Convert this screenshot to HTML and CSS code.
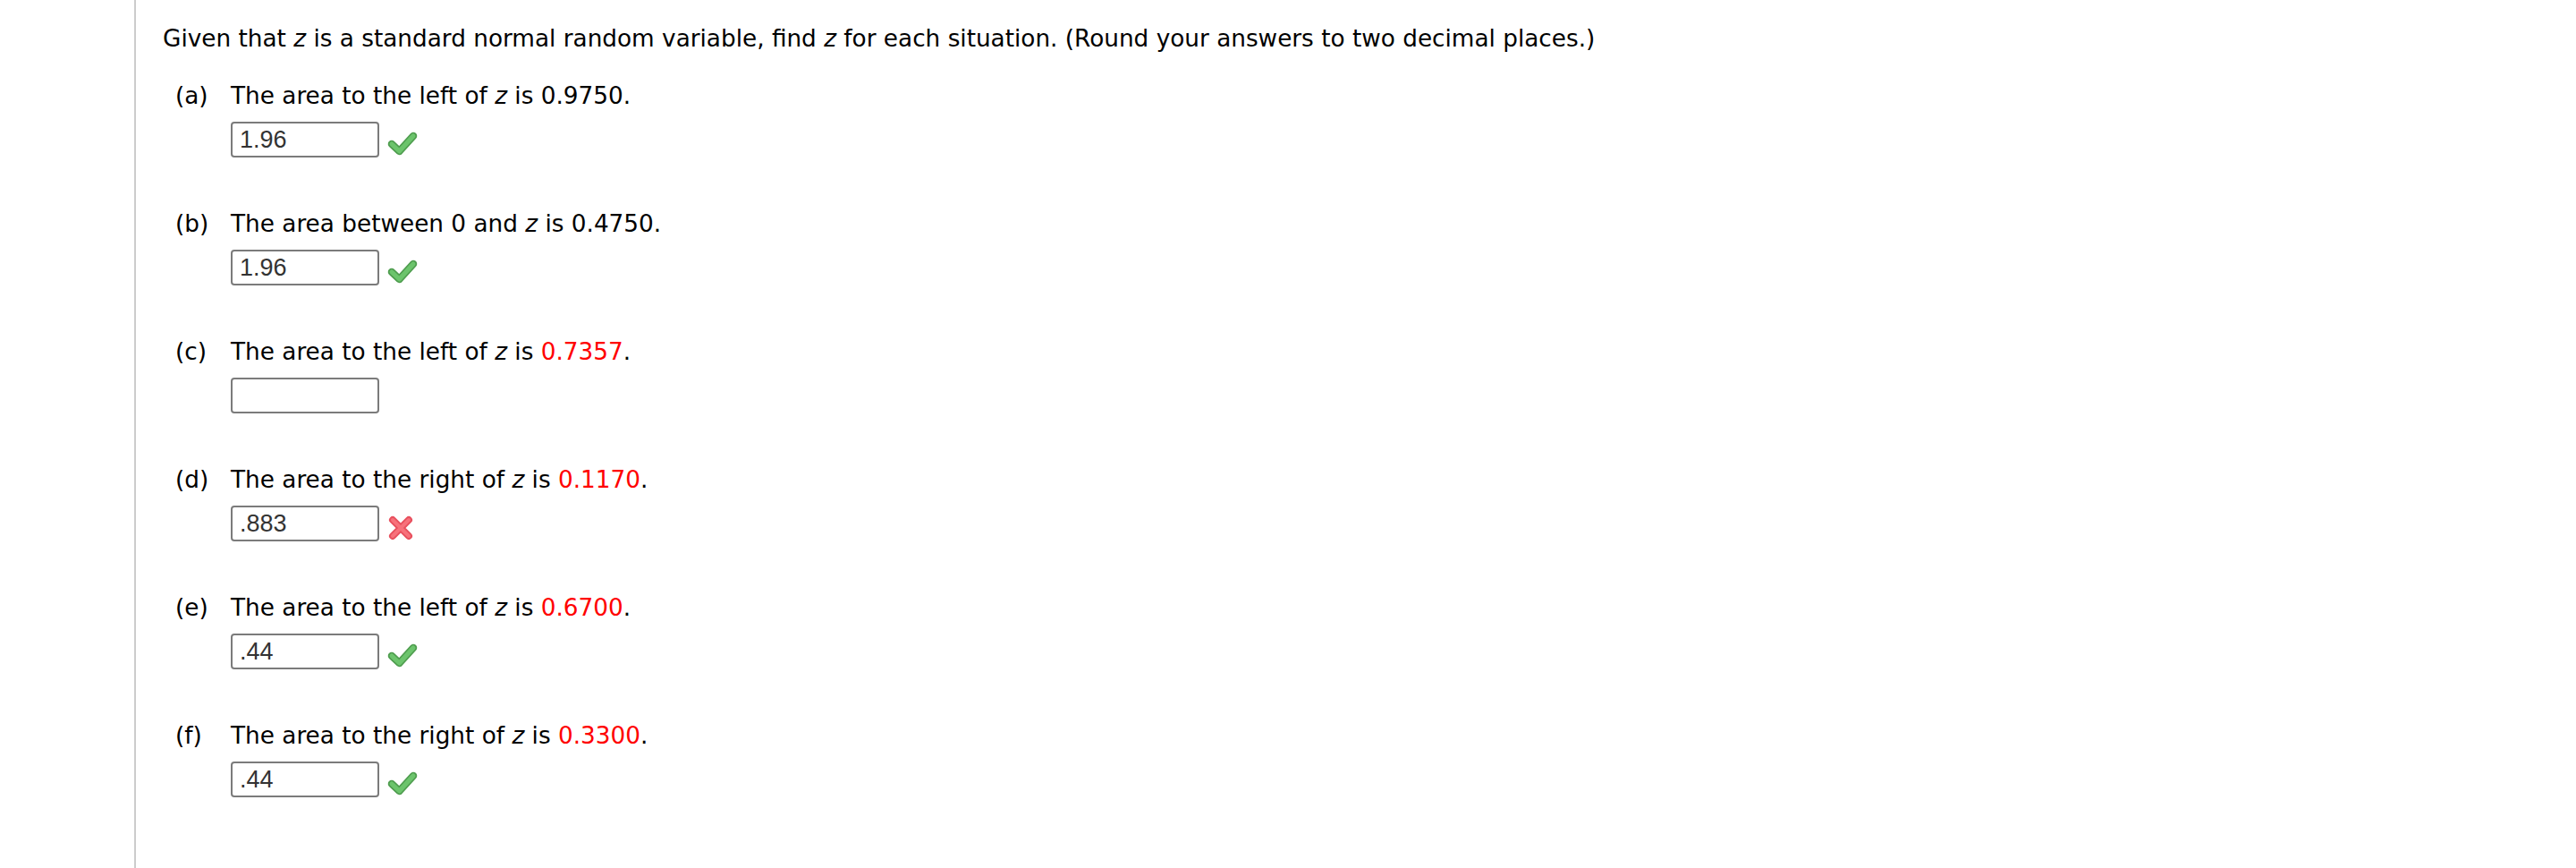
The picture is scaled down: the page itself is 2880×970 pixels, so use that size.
FILE: index.html
```html
<!DOCTYPE html>
<html>
<head>
<meta charset="utf-8">
<link rel="stylesheet" href="styles.css">
</head>
<body>
<div class="page">
  <p class="intro">Given that <i>z</i> is a standard normal random variable, find <i>z</i> for each situation. (Round your answers to two decimal places.)</p>

  <div class="item">
    <span class="label">(a)</span>
    <span class="text">The area to the left of <i>z</i> is 0.9750.</span>
    <div class="answer">
      <input class="box" type="text" value="1.96">
      <svg class="mark" width="34" height="28" viewBox="0 0 34 28"><path class="ok-outer" d="M5 14 L13.5 22 L29 5"/><path class="ok-inner" d="M5 14 L13.5 22 L29 5"/></svg>
    </div>
  </div>

  <div class="item">
    <span class="label">(b)</span>
    <span class="text">The area between 0 and <i>z</i> is 0.4750.</span>
    <div class="answer">
      <input class="box" type="text" value="1.96">
      <svg class="mark" width="34" height="28" viewBox="0 0 34 28"><path class="ok-outer" d="M5 14 L13.5 22 L29 5"/><path class="ok-inner" d="M5 14 L13.5 22 L29 5"/></svg>
    </div>
  </div>

  <div class="item">
    <span class="label">(c)</span>
    <span class="text">The area to the left of <i>z</i> is <span class="val">0.7357</span>.</span>
    <div class="answer">
      <input class="box" type="text" value="">
    </div>
  </div>

  <div class="item">
    <span class="label">(d)</span>
    <span class="text">The area to the right of <i>z</i> is <span class="val">0.1170</span>.</span>
    <div class="answer">
      <input class="box" type="text" value=".883">
      <svg class="mark" width="34" height="28" viewBox="0 0 34 28"><path class="no-outer" d="M6 5 L24 23 M24 5 L6 23"/><path class="no-inner" d="M6 5 L24 23 M24 5 L6 23"/></svg>
    </div>
  </div>

  <div class="item">
    <span class="label">(e)</span>
    <span class="text">The area to the left of <i>z</i> is <span class="val">0.6700</span>.</span>
    <div class="answer">
      <input class="box" type="text" value=".44">
      <svg class="mark" width="34" height="28" viewBox="0 0 34 28"><path class="ok-outer" d="M5 14 L13.5 22 L29 5"/><path class="ok-inner" d="M5 14 L13.5 22 L29 5"/></svg>
    </div>
  </div>

  <div class="item">
    <span class="label">(f)</span>
    <span class="text">The area to the right of <i>z</i> is <span class="val">0.3300</span>.</span>
    <div class="answer">
      <input class="box" type="text" value=".44">
      <svg class="mark" width="34" height="28" viewBox="0 0 34 28"><path class="ok-outer" d="M5 14 L13.5 22 L29 5"/><path class="ok-inner" d="M5 14 L13.5 22 L29 5"/></svg>
    </div>
  </div>
</div>
</body>
</html>
```

FILE: styles.css
```css
html, body {
  margin: 0;
  padding: 0;
  background: #fff;
}

.page {
  margin-left: 150px;
  border-left: 2px solid #cccccc;
  min-height: 970px;
  box-sizing: border-box;
  padding: 25px 0 0 30px;
  font-family: "DejaVu Sans", Verdana, sans-serif;
  font-size: 26.3px;
  line-height: 36px;
  color: #000;
}

.intro {
  margin: 0 0 28px 0;
}

.item {
  display: grid;
  grid-template-columns: 62px auto;
  padding-left: 14px;
  margin-bottom: 56px;
}

.label {
  grid-column: 1;
}

.text {
  grid-column: 2;
}

.val {
  color: #ff0000;
}

.answer {
  grid-column: 2;
  display: flex;
  align-items: center;
  gap: 9px;
  margin-top: 11px;
  height: 40px;
}

.box {
  box-sizing: border-box;
  width: 166px;
  height: 40px;
  margin: 0;
  border: 2px solid #7b7b7b;
  border-radius: 4px;
  padding: 0 8px;
  font-family: "Liberation Sans", Arial, sans-serif;
  font-size: 27px;
  color: #333;
  background: #fff;
  outline: none;
}

.mark {
  margin-top: 10px;
  flex: none;
}

.ok-outer {
  fill: none;
  stroke: #4f9d4f;
  stroke-width: 8.5;
  stroke-linecap: round;
  stroke-linejoin: round;
}

.ok-inner {
  fill: none;
  stroke: #6cc46c;
  stroke-width: 5;
  stroke-linecap: round;
  stroke-linejoin: round;
}

.no-outer {
  fill: none;
  stroke: #e8505e;
  stroke-width: 8;
  stroke-linecap: round;
}

.no-inner {
  fill: none;
  stroke: #f7717b;
  stroke-width: 4;
  stroke-linecap: round;
}
```
